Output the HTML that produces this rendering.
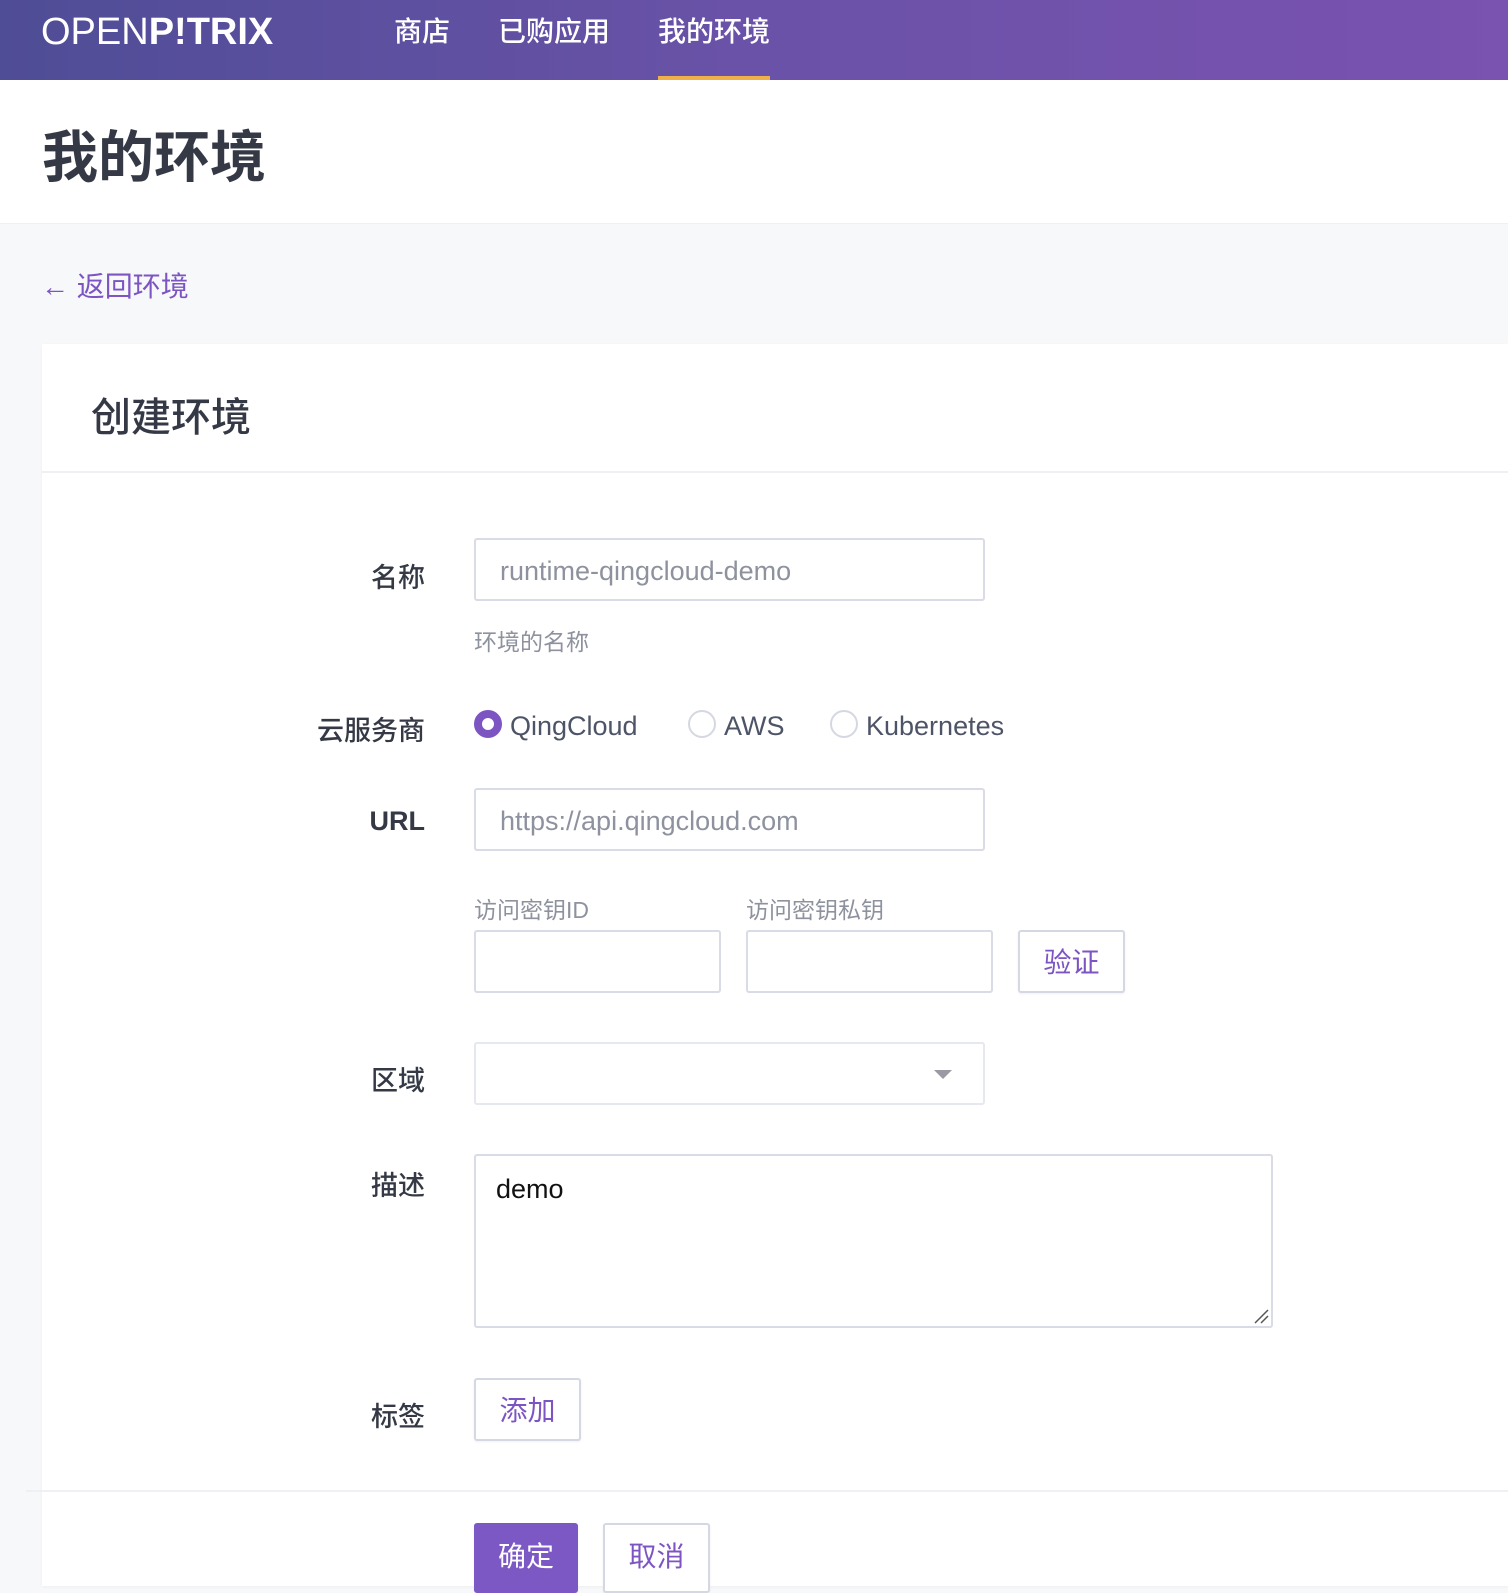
<!DOCTYPE html>
<html><head><meta charset="utf-8"><style>
*{margin:0;padding:0;box-sizing:border-box}
body{width:1508px;height:1586px;overflow:hidden;background:#f7f8fa;font-family:"Liberation Sans","Noto Sans CJK SC",sans-serif;position:relative;color:#343945}
.a{position:absolute}
.hdr{left:0;top:0;width:1508px;height:80px;background:linear-gradient(90deg,#4f4d96,#6a52a8 50%,#7a52b0)}
.nav{color:#fff;font-size:28px;top:10px;font-weight:500}
.lbl{font-size:27px;color:#343945;right:1083px;text-align:right;font-weight:500}
.inp{background:#fff;border:2px solid #d9dbe6;border-radius:3px}
.ph{font-size:27px;color:#8e929e;left:24px}
.btn{background:#fff;border:2px solid #d5d8e3;border-radius:3px;color:#7c55c3;font-size:28px;text-align:center;box-shadow:0 1px 2px rgba(0,0,0,.06)}
.radio{width:28px;height:28px;border-radius:50%;border:2px solid #d5d8e3;background:#fff}
.rt{font-size:27px;color:#4e5467}
</style></head><body>
<div class="a hdr"></div>
<div class="a" style="left:41px;top:11px;color:#fff;font-size:38px;font-weight:300">OPEN<b style="font-weight:700">P!TRIX</b></div>
<div class="a" style="left:658px;top:76px;width:112px;height:4px;background:#efb04a"></div>
<div class="a nav" style="left:394px">商店</div>
<div class="a nav" style="left:498px">已购应用</div>
<div class="a nav" style="left:658px">我的环境</div>
<div class="a" style="left:0;top:80px;width:1508px;height:144px;background:#fff;border-bottom:1px solid #eef0f3"></div>
<div class="a" style="left:42px;top:113px;font-size:56px;font-weight:700;color:#343945">我的环境</div>
<div class="a" style="left:41px;top:265px;font-size:28px;color:#7c55c3"><span style="font-size:28px">←</span> 返回环境</div>
<div class="a" style="left:42px;top:344px;width:1466px;height:1242px;background:#fff;box-shadow:0 1px 3px rgba(0,0,0,.04)"></div>
<div class="a" style="left:91px;top:385px;font-size:40px;font-weight:500;color:#343945">创建环境</div>
<div class="a" style="left:42px;top:471px;width:1466px;height:2px;background:#eef0f4"></div>

<div class="a lbl" style="top:556px">名称</div>
<div class="a inp" style="left:474px;top:538px;width:511px;height:63px"><span class="a ph" style="top:16px">runtime-qingcloud-demo</span></div>
<div class="a" style="left:474px;top:623px;font-size:23px;color:#8e929e">环境的名称</div>

<div class="a lbl" style="top:709px">云服务商</div>
<div class="a radio" style="left:474px;top:710px;border:8px solid #7c55c3"></div>
<div class="a rt" style="left:510px;top:711px">QingCloud</div>
<div class="a radio" style="left:688px;top:710px"></div>
<div class="a rt" style="left:724px;top:711px">AWS</div>
<div class="a radio" style="left:830px;top:710px"></div>
<div class="a rt" style="left:866px;top:711px">Kubernetes</div>

<div class="a lbl" style="top:806px;font-weight:700">URL</div>
<div class="a inp" style="left:474px;top:788px;width:511px;height:63px"><span class="a ph" style="top:16px">https://api.qingcloud.com</span></div>

<div class="a" style="left:474px;top:891px;font-size:23px;color:#8e929e">访问密钥ID</div>
<div class="a" style="left:746px;top:891px;font-size:23px;color:#8e929e">访问密钥私钥</div>
<div class="a inp" style="left:474px;top:930px;width:247px;height:63px"></div>
<div class="a inp" style="left:746px;top:930px;width:247px;height:63px"></div>
<div class="a btn" style="left:1018px;top:930px;width:107px;height:63px;line-height:61px">验证</div>

<div class="a lbl" style="top:1059px">区域</div>
<div class="a inp" style="left:474px;top:1042px;width:511px;height:63px;border-color:#e6e8ef"></div>
<div class="a" style="left:934px;top:1070px;width:0;height:0;border-left:9px solid transparent;border-right:9px solid transparent;border-top:9px solid #9a9aa2"></div>

<div class="a lbl" style="top:1164px">描述</div>
<div class="a inp" style="left:474px;top:1154px;width:799px;height:174px"><span class="a" style="left:20px;top:18px;font-size:27px;color:#111">demo</span>
<svg class="a" style="right:2px;bottom:2px" width="16" height="16"><path d="M2 15L15 2M8 15L15 8" stroke="#555" stroke-width="1.5"/></svg></div>

<div class="a lbl" style="top:1395px">标签</div>
<div class="a btn" style="left:474px;top:1378px;width:107px;height:63px;line-height:61px">添加</div>

<div class="a" style="left:26px;top:1490px;width:1482px;height:2px;background:#eef0f4"></div>
<div class="a btn" style="left:474px;top:1523px;width:104px;height:70px;line-height:64px;background:#7c58c5;border-color:#7c58c5;color:#fff">确定</div>
<div class="a btn" style="left:603px;top:1523px;width:107px;height:70px;line-height:64px">取消</div>
</body></html>
